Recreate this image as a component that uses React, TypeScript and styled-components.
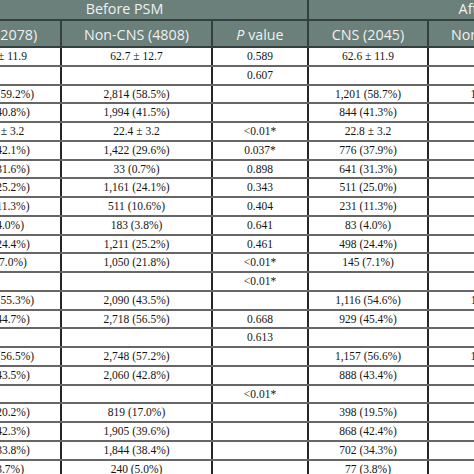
import * as React from "react";
import styled, { createGlobalStyle } from "styled-components";

const GlobalStyle = createGlobalStyle`
  html, body {
    margin: 0;
    padding: 0;
    background: #ffffff;
  }
`;

type Row = [string, string, string, string, string, string];

const rows: Row[] = [
  ["62.5 ± 11.9", "62.7 ± 12.7", "0.589", "62.6 ± 11.9", "62.5 ± 12.4", "0.871"],
  ["", "", "0.607", "", "", "0.712"],
  ["1,230 (59.2%)", "2,814 (58.5%)", "", "1,201 (58.7%)", "1,187 (58.0%)", ""],
  ["848 (40.8%)", "1,994 (41.5%)", "", "844 (41.3%)", "858 (42.0%)", ""],
  ["22.9 ± 3.2", "22.4 ± 3.2", "<0.01*", "22.8 ± 3.2", "22.7 ± 3.1", "0.315"],
  ["876 (42.1%)", "1,422 (29.6%)", "0.037*", "776 (37.9%)", "781 (38.2%)", "0.872"],
  ["651 (31.6%)", "33 (0.7%)", "0.898", "641 (31.3%)", "638 (31.2%)", "0.918"],
  ["523 (25.2%)", "1,161 (24.1%)", "0.343", "511 (25.0%)", "518 (25.3%)", "0.746"],
  ["234 (11.3%)", "511 (10.6%)", "0.404", "231 (11.3%)", "227 (11.1%)", "0.843"],
  ["83 (4.0%)", "183 (3.8%)", "0.641", "83 (4.0%)", "79 (3.9%)", "0.806"],
  ["507 (24.4%)", "1,211 (25.2%)", "0.461", "498 (24.4%)", "503 (24.6%)", "0.887"],
  ["145 (7.0%)", "1,050 (21.8%)", "<0.01*", "145 (7.1%)", "152 (7.4%)", "0.667"],
  ["", "", "<0.01*", "", "", "0.934"],
  ["1,149 (55.3%)", "2,090 (43.5%)", "", "1,116 (54.6%)", "1,112 (54.4%)", ""],
  ["929 (44.7%)", "2,718 (56.5%)", "0.668", "929 (45.4%)", "933 (45.6%)", ""],
  ["", "", "0.613", "", "", "0.871"],
  ["1,174 (56.5%)", "2,748 (57.2%)", "", "1,157 (56.6%)", "1,160 (56.7%)", ""],
  ["904 (43.5%)", "2,060 (42.8%)", "", "888 (43.4%)", "885 (43.3%)", ""],
  ["", "", "<0.01*", "", "", "0.762"],
  ["420 (20.2%)", "819 (17.0%)", "", "398 (19.5%)", "402 (19.7%)", ""],
  ["879 (42.3%)", "1,905 (39.6%)", "", "868 (42.4%)", "861 (42.1%)", ""],
  ["702 (33.8%)", "1,844 (38.4%)", "", "702 (34.3%)", "708 (34.6%)", ""],
  ["77 (3.7%)", "240 (5.0%)", "", "77 (3.8%)", "74 (3.6%)", ""],
];

const colWidths = [120, 151, 96, 120, 151, 96];

const App: React.FC = () => {
  return (
    <Frame>
      <GlobalStyle />
      <Table>
        <colgroup>
          {colWidths.map((w, i) => (
            <Col key={i} $w={w} />
          ))}
        </colgroup>
        <thead>
          <HeadRow $h={20}>
            <Th colSpan={3}>Before PSM</Th>
            <Th colSpan={3}>After PSM</Th>
          </HeadRow>
          <HeadRow $h={27}>
            <Th $low>CNS (2078)</Th>
            <Th $low>Non-CNS (4808)</Th>
            <Th $low>
              <em>P</em> value
            </Th>
            <Th $low>CNS (2045)</Th>
            <Th $low>Non-CNS (2045)</Th>
            <Th $low>
              <em>P</em> value
            </Th>
          </HeadRow>
        </thead>
        <tbody>
          {rows.map((r, i) => (
            <BodyRow key={i}>
              {r.map((c, j) => (
                <Td key={j}>{c}</Td>
              ))}
            </BodyRow>
          ))}
        </tbody>
      </Table>
    </Frame>
  );
};

export default App;

const Frame = styled.div`
  width: 474px;
  height: 474px;
  overflow: hidden;
  background: #ffffff;
`;

const Table = styled.table`
  border-collapse: collapse;
  table-layout: fixed;
  width: 734px;
  margin-left: -60px;
`;

const Col = styled.col<{ $w: number }>`
  width: ${(p) => p.$w}px;
`;

const HeadRow = styled.tr<{ $h: number }>`
  height: ${(p) => p.$h}px;
`;

const Th = styled.th<{ $low?: boolean }>`
  background: #6b7f7b;
  color: #eef2f0;
  font-family: "Open Sans", "DejaVu Sans", sans-serif;
  font-size: 14.3px;
  font-weight: 400;
  text-align: center;
  vertical-align: middle;
  padding: ${(p) => (p.$low ? "3px 0 0" : "0")};
  border: 2px solid #34403e;
  border-top: none;
  white-space: nowrap;
  line-height: 1;

  em {
    font-style: italic;
  }
`;

const BodyRow = styled.tr`
  height: 18.75px;
`;

const Td = styled.td`
  font-family: "Liberation Serif", "Times New Roman", serif;
  font-size: 11.5px;
  color: #151515;
  text-align: center;
  vertical-align: middle;
  padding: 1px 0 0;
  line-height: 1;
  white-space: nowrap;
  border-top: 2px solid #666666;
  border-bottom: 2px solid #666666;
  border-left: 2px solid #262626;
  border-right: 2px solid #262626;
`;
